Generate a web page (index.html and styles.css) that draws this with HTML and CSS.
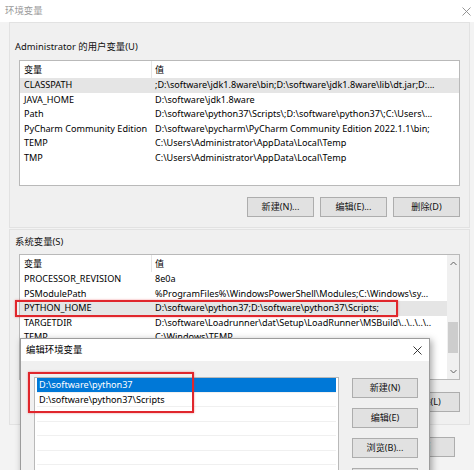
FILE: index.html
```html
<!DOCTYPE html>
<html lang="zh-CN">
<head>
<meta charset="utf-8">
<title>环境变量</title>
<link rel="stylesheet" href="styles.css">
</head>
<body>
<div class="win">
  <div class="titlebar">
    <span class="title inactive">环境变量</span>
    <svg class="xicon" width="9" height="9" viewBox="0 0 9 9"><path d="M0.5 0.5L8.5 8.5M8.5 0.5L0.5 8.5" stroke="#8a8a8a" stroke-width="0.9" fill="none"/></svg>
  </div>
  <div class="body">
    <section class="group group-user">
      <div class="glabel">Administrator 的用户变量(U)</div>
      <div class="list">
        <div class="lmain">
          <div class="lhead"><div class="c1">变量</div><div class="c2">值</div></div>
          <div class="row sel"><div class="c1">CLASSPATH</div><div class="c2">;D:\software\jdk1.8ware\bin;D:\software\jdk1.8ware\lib\dt.jar;D:...</div></div>
          <div class="row"><div class="c1">JAVA_HOME</div><div class="c2">D:\software\jdk1.8ware</div></div>
          <div class="row"><div class="c1">Path</div><div class="c2">D:\software\python37\Scripts\;D:\software\python37\;C:\Users\...</div></div>
          <div class="row"><div class="c1">PyCharm Community Edition</div><div class="c2">D:\software\pycharm\PyCharm Community Edition 2022.1.1\bin;</div></div>
          <div class="row"><div class="c1">TEMP</div><div class="c2">C:\Users\Administrator\AppData\Local\Temp</div></div>
          <div class="row"><div class="c1">TMP</div><div class="c2">C:\Users\Administrator\AppData\Local\Temp</div></div>
        </div>
      </div>
      <div class="btns">
        <button class="btn">新建(N)...</button>
        <button class="btn">编辑(E)...</button>
        <button class="btn">删除(D)</button>
      </div>
    </section>
    <section class="group group-sys">
      <div class="glabel">系统变量(S)</div>
      <div class="list">
        <div class="lmain">
          <div class="lhead"><div class="c1">变量</div><div class="c2">值</div></div>
          <div class="row"><div class="c1">PROCESSOR_REVISION</div><div class="c2">8e0a</div></div>
          <div class="row"><div class="c1">PSModulePath</div><div class="c2">%ProgramFiles%\WindowsPowerShell\Modules;C:\Windows\sy...</div></div>
          <div class="row sel"><div class="c1">PYTHON_HOME</div><div class="c2">D:\software\python37;D:\software\python37\Scripts;</div></div>
          <div class="row"><div class="c1">TARGETDIR</div><div class="c2">D:\software\Loadrunner\dat\Setup\LoadRunner\MSBuild\..\..\..\..</div></div>
          <div class="row"><div class="c1">TEMP</div><div class="c2">C:\Windows\TEMP</div></div>
        </div>
        <div class="vscroll">
          <div class="arrow"><svg width="7" height="5" viewBox="0 0 7 5"><path d="M0.5 4L3.5 1L6.5 4" stroke="#606060" stroke-width="1" fill="none"/></svg></div>
          <div class="track"><div class="thumb"></div></div>
          <div class="arrow"><svg width="7" height="5" viewBox="0 0 7 5"><path d="M0.5 1L3.5 4L6.5 1" stroke="#606060" stroke-width="1" fill="none"/></svg></div>
        </div>
      </div>
      <div class="btns">
        <button class="btn">新建(W)...</button>
        <button class="btn">编辑(I)...</button>
        <button class="btn">删除(L)</button>
      </div>
    </section>
    <div class="footer">
      <button class="btn">确定</button>
      <button class="btn">取消</button>
    </div>
  </div>

  <div class="mark mark-sys"></div>

  <div class="dlg">
    <div class="titlebar dlg-title">
      <span class="title">编辑环境变量</span>
      <svg class="xicon" width="9" height="9" viewBox="0 0 9 9"><path d="M0.5 0.5L8.5 8.5M8.5 0.5L0.5 8.5" stroke="#222" stroke-width="0.9" fill="none"/></svg>
    </div>
    <div class="dlg-body">
      <div class="elist">
        <div class="erow active">D:\software\python37</div>
        <div class="erow">D:\software\python37\Scripts</div>
        <div class="erow"></div>
        <div class="erow"></div>
        <div class="erow"></div>
        <div class="erow"></div>
      </div>
      <div class="ebtns">
        <button class="btn">新建(N)</button>
        <button class="btn">编辑(E)</button>
        <button class="btn">浏览(B)...</button>
        <button class="btn btn-hidden"></button>
      </div>
    </div>
  </div>

  <div class="mark mark-edit"></div>
</div>
</body>
</html>
```

FILE: styles.css
```css
* { box-sizing: border-box; }
html, body { margin: 0; padding: 0; }
body {
  width: 474px;
  height: 470px;
  overflow: hidden;
  background: #f0f0f0;
  font-family: "Noto Sans", "Noto Sans CJK SC", sans-serif;
  font-size: 9.1px;
  color: #000;
}
.win {
  position: relative;
  width: 474px;
  height: 470px;
  background: #f3f3f3;
  overflow: hidden;
}
.titlebar {
  height: 22px;
  background: #fff;
  display: flex;
  align-items: center;
  justify-content: space-between;
  padding: 0 3px 0 5px;
}
.title { line-height: 14px; color: #000; font-size: 9.4px; }
.title.inactive { color: #9a9a9a; }
.xicon { display: block; }

.body {
  padding: 0 4px 0 9px;
  display: flex;
  flex-direction: column;
}
.group {
  border: 1px solid #e2e2e2;
  background: #f0f0f0;
  padding: 0 9px;
  display: flex;
  flex-direction: column;
}
.group-user { padding-top: 17px; padding-bottom: 10px; }
.group-sys { margin-top: 1px; padding-top: 5px; padding-bottom: 12px; }
.glabel {
  line-height: 14px;
  margin-left: -4px;
  color: #111;
  font-size: 9.4px;
}
.group-user .glabel { margin-bottom: 6px; }
.group-sys .glabel { margin-bottom: 5px; }

.list {
  height: 126px;
  background: #fff;
  border: 1px solid #b9b9b9;
  display: flex;
  overflow: hidden;
}
.lmain { flex: 1; min-width: 0; overflow: hidden; }
.lhead {
  display: flex;
  height: 17px;
  line-height: 17px;
}
.lhead .c1 { border-right: 1px solid #e5e5e5; }
.row {
  display: flex;
  height: 14.5px;
  line-height: 14.5px;
}
.row.sel { background: #e5e5e5; }
.c1 {
  width: 132px;
  flex: none;
  padding-left: 4px;
  white-space: nowrap;
  overflow: hidden;
}
.c2 {
  flex: 1;
  padding-left: 3px;
  white-space: nowrap;
  overflow: hidden;
}

.vscroll {
  width: 12px;
  flex: none;
  background: #f0f0f0;
  display: flex;
  flex-direction: column;
}
.arrow {
  height: 16px;
  display: flex;
  align-items: center;
  justify-content: center;
}
.track { flex: 1; padding: 0 1px; }
.thumb {
  margin-top: 51px;
  height: 31px;
  background: #cdcdcd;
}

.btns {
  display: flex;
  justify-content: flex-end;
  gap: 6px;
  margin-top: 11px;
}
.group-sys .btns { margin-top: 12px; }
.btn {
  width: 67px;
  height: 20px;
  padding: 0;
  background: #e1e1e1;
  border: 1px solid #adadad;
  font: inherit;
  color: #111;
  line-height: 18px;
  text-align: center;
}
.footer {
  display: flex;
  justify-content: flex-end;
  gap: 6px;
  margin-top: 12px;
  padding-right: 15px;
}

.mark {
  position: absolute;
  border: 2px solid #e0262c;
  box-shadow: 0 0 2px rgba(224, 38, 44, 0.5);
}
.mark-sys { left: 15px; top: 300px; width: 383px; height: 17px; }
.mark-edit { left: 28px; top: 372px; width: 166px; height: 41px; }

.dlg {
  position: absolute;
  left: 20px;
  top: 338px;
  width: 410px;
  height: 150px;
  background: #f0f0f0;
  border: 1px solid #9c9c9c;
  box-shadow: 2px 2px 7px rgba(0, 0, 0, 0.35);
}
.dlg-title { padding: 0 7px 0 5px; }
.dlg-body {
  display: flex;
  gap: 13px;
  padding: 16px 0 0 13px;
}
.elist {
  width: 305px;
  height: 120px;
  background: #fff;
  border: 1px solid #b9b9b9;
  padding: 0 2px;
}
.erow {
  height: 14.5px;
  line-height: 14.5px;
  padding-left: 2px;
  border-bottom: 1px solid #f0f0f0;
  white-space: nowrap;
}
.erow.active { background: #0078d7; color: #fff; }
.ebtns {
  display: flex;
  flex-direction: column;
  gap: 10px;
  padding-top: 1px;
}
.ebtns .btn { width: 66px; }
```
